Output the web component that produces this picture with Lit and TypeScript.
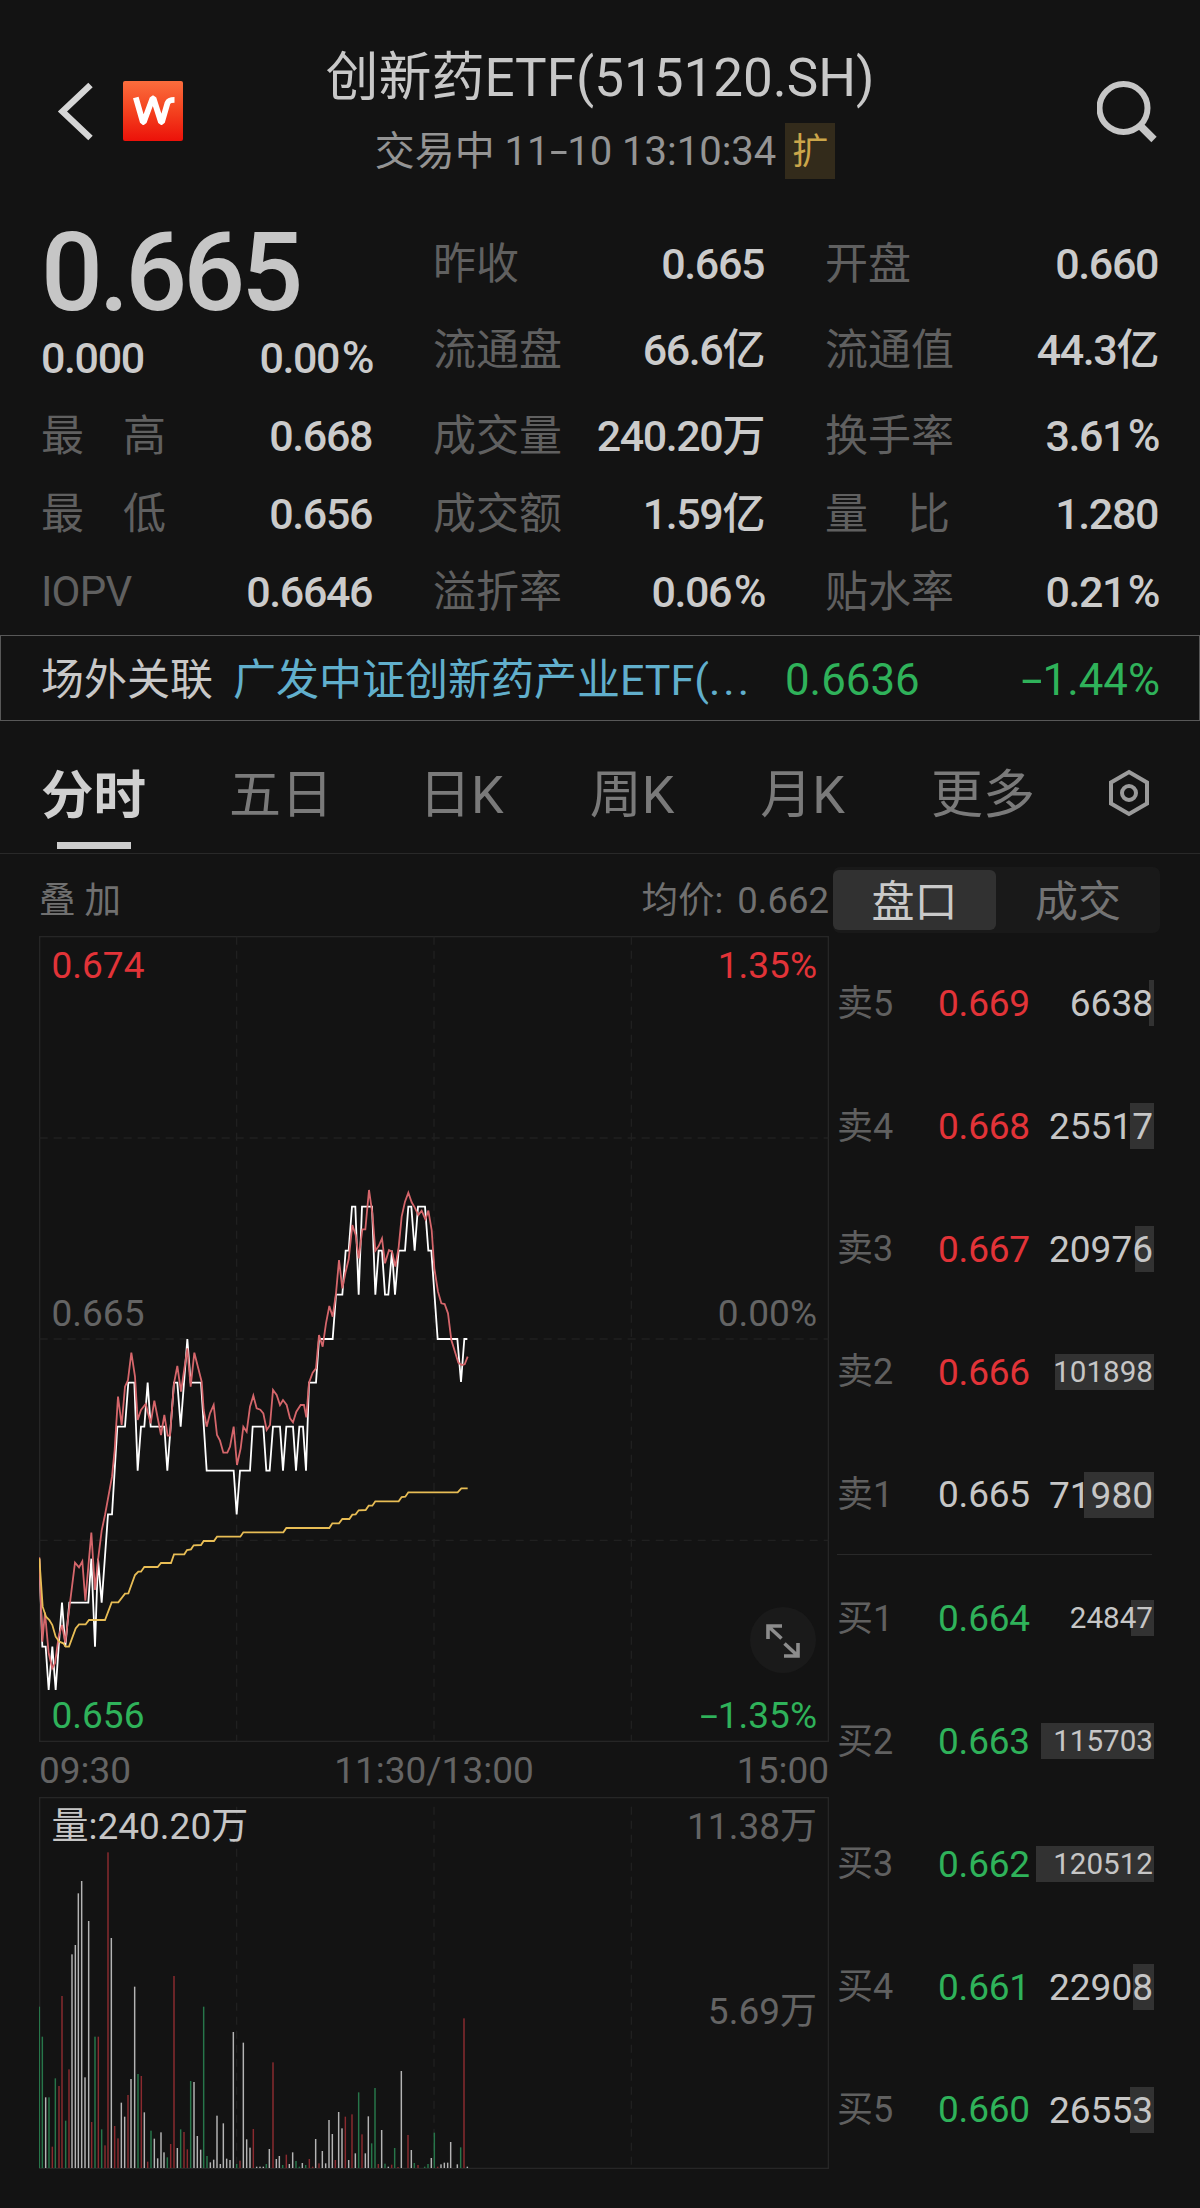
import { LitElement, html, css, svg } from "lit";
import { customElement, property } from "lit/decorators.js";
import { classMap } from "lit/directives/class-map.js";

type Tone = "up" | "down" | "flat";

// Chart samples live on a grid three times finer than the page pixels.
const PRICE_LINE =
  "28,1166 37,1430 47,1430 56,1560 67,1430 77,1560 86,1430 96,1298 106,1430 118,1298 175,1298 184,1166 195,1430 204,1166 215,1298 234,1033 246,1033 262,770 285,770 295,638 313,638 323,902 333,770 343,770 353,638 362,770 403,770 412,902 432,638 442,638 452,770 472,507 482,638 513,638 530,902 611,902 620,1033 630,902 660,902 668,770 700,770 709,902 719,902 729,770 750,770 759,902 769,770 789,770 798,902 808,770 819,770 828,902 837,638 858,638 867,507 908,507 918,374 937,374 947,242 956,242 966,110 976,110 986,374 996,110 1026,110 1036,374 1046,242 1056,242 1065,374 1075,374 1086,242 1095,374 1106,242 1125,242 1135,110 1144,110 1154,242 1164,110 1185,110 1195,242 1204,242 1223,507 1282,507 1293,636 1303,507 1312,507";
const IOPV_LINE =
  "28,1162 32,1280 37,1415 45,1328 56,1450 67,1495 75,1480 86,1400 96,1365 106,1418 116,1330 135,1178 147,1192 157,1174 166,1292 184,1088 195,1260 204,1170 215,1082 225,1035 246,920 254,840 264,680 275,765 285,650 294,630 304,548 315,620 323,750 333,720 347,702 362,760 373,692 393,795 403,735 413,797 420,797 432,640 442,588 453,665 472,535 482,650 493,548 515,635 521,720 530,770 540,730 551,705 561,795 570,812 580,848 592,848 600,830 611,770 621,885 632,835 640,770 650,785 660,710 670,677 680,715 691,719 700,730 710,780 720,765 729,660 740,675 750,705 759,690 770,705 780,745 789,757 799,725 812,705 822,705 829,742 837,638 848,608 858,595 867,495 878,530 888,460 898,408 908,440 918,370 927,270 937,355 947,305 956,268 967,165 977,195 986,265 997,178 1006,178 1017,60 1027,130 1036,242 1046,228 1056,205 1065,280 1077,240 1086,245 1096,290 1106,232 1115,140 1125,95 1135,68 1145,97 1154,112 1165,135 1175,122 1186,148 1195,122 1205,180 1213,295 1224,365 1234,400 1244,402 1254,430 1264,510 1285,578 1295,585 1304,583 1313,560";
const AVERAGE_LINE =
  "28,1165 38,1310 48,1340 58,1350 67,1365 77,1400 88,1415 100,1420 107,1430 117,1430 137,1375 147,1363 167,1363 177,1350 225,1350 245,1297 265,1297 285,1271 295,1270 315,1215 325,1205 333,1205 343,1191 383,1191 393,1179 423,1179 432,1153 463,1153 471,1140 483,1138 491,1126 513,1125 521,1113 552,1113 561,1100 631,1100 640,1087 760,1087 769,1074 898,1074 907,1060 927,1060 937,1047 958,1047 967,1034 977,1033 986,1021 1007,1020 1016,1007 1027,1007 1036,994 1106,994 1115,981 1126,980 1135,967 1283,967 1294,955 1313,955";

// Each entry is the bar's x, its tone (g, r or w) and its top edge.
const VOLUME =
  "28g650 37g740 47w922 57g922 67r1070 76g865 87r888 96r618 107g992 117r838 126w493 136w465 145w310 155w273 165w862 176w393 185r996 195g740 205r740 215g1018 225r1066 234r187 244w444 254r1008 264r1045 274w938 284w980 294r915 303w867 314w590 324g852 334r858 343w967 353r1115 363g1022 373w1046 383w1105 393w1027 402w1087 412g1102 422r1062 432r558 442w1074 452g1018 462r1026 472r1078 482g873 492w876 502w1038 512w1079 521g650 531g1098 541w1117 551w1109 561w977 571w1122 580w1000 590w1106 600w1110 610w726 620g1122 630r1112 640w758 650w1048 660w1073 670r1017 680w1130 690w1130 700w1130 709g1122 718w1077 729r817 739w1107 748w1098 758g1125 769r1094 778w1122 788w1087 798g1113 808g1130 817w1119 827g1125 838r1107 848r1130 857w1047 867r1120 877w1083 887w1120 897w990 907w1032 916r1110 926w966 936w1015 946r980 956w1110 966r973 976w1090 986g907 996r1033 1006w1090 1015w979 1025g1060 1035g894 1045r1122 1055w1020 1065g1121 1075w1130 1085r1124 1094g1074 1104r1131 1114w843 1134r1035 1144w1080 1153g1119 1164r1125 1184g1130 1194g1122 1204w1104 1213g1028 1223r1130 1233w1123 1243w1118 1253w1118 1262w1056 1282w1123 1292g1072 1302r685 1312w1130"
    .split(" ")
    .map((s) => {
      const m = /^(\d+)([grw])(\d+)$/.exec(s)!;
      return { x: +m[1], tone: m[2], top: +m[3] };
    });

const signed = (text: string) =>
  text.startsWith("-") ? html`<span class="dash">-</span>${text.slice(1)}` : text;

const dashStyle = css`
  .dash {
    display: inline-block;
    width: 0.49em;
    text-align: center;
    transform: scaleX(1.75);
  }
`;

const base = css`
  :host {
    display: block;
    box-sizing: border-box;
    font-family: Roboto, "Noto Sans CJK SC", sans-serif;
    line-height: 1.2;
    white-space: nowrap;
  }
  *,
  *::before {
    box-sizing: border-box;
  }
  svg {
    display: block;
  }
`;

@customElement("quote-header")
export class QuoteHeader extends LitElement {
  static styles = [
    base,
    css`
      .bar {
        height: 220px;
        display: grid;
        grid-template-columns: 183px 1fr 103px;
      }
      .left {
        display: flex;
        align-items: flex-start;
        gap: 28px;
        padding: 81px 0 0 56px;
      }
      .back,
      .logo {
        flex: none;
      }
      .middle {
        display: flex;
        flex-direction: column;
        align-items: center;
        padding: 44px 80px 0 0;
      }
      .title {
        font-size: 53px;
        line-height: 68px;
        color: #c8c8c8;
      }
      .sub {
        display: flex;
        align-items: center;
        gap: 9px;
        margin-top: 11px;
        height: 56px;
        font-size: 40px;
        line-height: 59px;
        color: #949494;
        padding-left: 10px;
      }
      .dash {
        display: inline-block;
        width: 0.44em;
        text-align: center;
        transform: scaleX(1.6);
      }
      .badge {
        width: 50px;
        height: 56px;
        line-height: 58px;
        text-align: center;
        font-size: 36px;
        background: #332b1b;
        color: #cba64a;
      }
      .search {
        padding-top: 80px;
      }
    `,
  ];
  render() {
    return html`<header class="bar">
      <div class="left">
        <svg class="back" width="39" height="60" viewBox="0 0 39 60" fill="none">
          <path d="M34.5 4 L6.5 30.5 L34.5 57" stroke="#d6d6d6" stroke-width="6.4" />
        </svg>
        <svg class="logo" width="60" height="60" viewBox="0 0 60 60">
          <defs>
            <linearGradient id="brand" x1="0" y1="0" x2="0" y2="1">
              <stop offset="0" stop-color="#fb6d3d" />
              <stop offset="0.5" stop-color="#f4421f" />
              <stop offset="1" stop-color="#ec1109" />
            </linearGradient>
          </defs>
          <rect width="60" height="60" rx="2" fill="url(#brand)" />
          <path
            d="M12.8 16.5 L19.8 41 H20.8 L29.5 17.5 H30.5 L38 41 H39 L44.5 22 Q45.8 18.8 51.5 18.8"
            fill="none" stroke="#fff" stroke-width="5.8" stroke-linejoin="bevel" />
        </svg>
      </div>
      <div class="middle">
        <div class="title">创新药ETF(515120.SH)</div>
        <div class="sub">
          <span>交易中 11<span class="dash">-</span>10 13:10:34</span>
          <span class="badge">扩</span>
        </div>
      </div>
      <div class="search">
        <svg width="62" height="64" viewBox="0 0 62 64" fill="none" stroke="#c6c6c6">
          <circle cx="26.5" cy="28" r="24" stroke-width="6" />
          <path d="M42.5 45 L57 59.5" stroke-width="7.5" />
        </svg>
      </div>
    </header>`;
  }
}

@customElement("quote-stats")
export class QuoteStats extends LitElement {
  static styles = [
    base,
    css`
      .grid {
        height: 415px;
        display: grid;
        grid-template-columns: 331px 331px 333px;
        column-gap: 61px;
        padding-left: 41px;
        font-size: 43px;
        letter-spacing: -1.4px;
        color: #cbcbcb;
        font-weight: 500;
      }
      .top {
        height: 176px;
        display: flex;
        flex-direction: column;
      }
      .row {
        height: 78px;
        padding-top: 3px;
        display: flex;
        align-items: center;
        justify-content: space-between;
      }
      .top .row {
        height: 86.5px;
      }
      .top .row.change {
        height: 67px;
      }
      .last {
        height: 104px;
        line-height: 106px;
        font-size: 109px;
        letter-spacing: -4px;
        color: #c6c6c6;
      }
      .pct {
        margin-left: 2.5px;
        margin-right: -1px;
        font-size: 44.5px;
        line-height: 1;
      }
      .label {
        color: #606060;
        font-weight: 400;
        letter-spacing: 0;
      }
      .label.wide {
        width: 125px;
        display: flex;
        justify-content: space-between;
      }
      .label.latin {
        font-size: 42px;
        letter-spacing: -0.8px;
      }
    `,
  ];
  private value(text: string) {
    return text.endsWith("%")
      ? html`<span>${text.slice(0, -1)}<span class="pct">%</span></span>`
      : html`<span>${text}</span>`;
  }
  private row(label: string, value: string) {
    const wide = label.includes(" ");
    return html`<div class="row">
      <span class=${classMap({ label: true, wide, latin: label === "IOPV" })}
        >${wide ? label.split(" ").map((c) => html`<span>${c}</span>`) : label}</span
      >
      ${this.value(value)}
    </div>`;
  }
  render() {
    return html`<section class="grid">
      <div>
        <div class="top">
          <div class="last">0.665</div>
          <div class="row change"><span>0.000</span>${this.value("0.00%")}</div>
        </div>
        ${this.row("最 高", "0.668")} ${this.row("最 低", "0.656")}
        ${this.row("IOPV", "0.6646")}
      </div>
      <div>
        <div class="top">${this.row("昨收", "0.665")} ${this.row("流通盘", "66.6亿")}</div>
        ${this.row("成交量", "240.20万")} ${this.row("成交额", "1.59亿")}
        ${this.row("溢折率", "0.06%")}
      </div>
      <div>
        <div class="top">${this.row("开盘", "0.660")} ${this.row("流通值", "44.3亿")}</div>
        ${this.row("换手率", "3.61%")} ${this.row("量 比", "1.280")}
        ${this.row("贴水率", "0.21%")}
      </div>
    </section>`;
  }
}

@customElement("linked-fund")
export class LinkedFund extends LitElement {
  static styles = [
    base,
    dashStyle,
    css`
      .row {
        height: 86px;
        border: 1.5px solid #585858;
        display: grid;
        grid-template-columns: 192px 552px 1fr auto;
        align-items: center;
        padding: 5px 39px 0 40px;
        font-size: 43px;
        color: #c8c8c8;
      }
      .name {
        color: #61afcc;
      }
      .dots {
        letter-spacing: 3px;
      }
      .down {
        color: #2fb25a;
        font-size: 43.8px;
      }
    `,
  ];
  render() {
    return html`<section class="row">
      <span>场外关联</span>
      <span class="name">广发中证创新药产业ETF(<span class="dots">...</span></span>
      <span class="down">0.6636</span>
      <span class="down">${signed("-1.44%")}</span>
    </section>`;
  }
}

@customElement("period-tabs")
export class PeriodTabs extends LitElement {
  static styles = [
    base,
    css`
      .tabs {
        height: 133px;
        display: flex;
        gap: 86px;
        padding: 37px 0 0 41px;
        border-bottom: 1px solid #292929;
        font-size: 52px;
        line-height: 76px;
        color: #7a7a7a;
      }
      .tab {
        display: flex;
        flex-direction: column;
        align-items: center;
      }
      .active {
        color: #d0d0d0;
        font-weight: 700;
        font-size: 52.5px;
        margin-right: -3px;
      }
      .active::after {
        content: "";
        width: 74px;
        height: 7px;
        margin-top: 8px;
        background: #cdcdcd;
      }
      .gear {
        margin: 11px 0 0 -13px;
      }
    `,
  ];
  render() {
    const tabs = ["分时", "五日", "日K", "周K", "月K", "更多"];
    return html`<nav class="tabs">
      ${tabs.map(
        (t, i) => html`<span class=${classMap({ tab: true, active: i === 0 })}>${t}</span>`
      )}
      <svg class="gear" width="42" height="48" viewBox="0 0 42 48" fill="none" stroke="#9b9b9b">
        <path d="M21 3 L39 13.5 V34.5 L21 45 L3 34.5 V13.5 Z" stroke-width="4" />
        <circle cx="21" cy="24" r="7" stroke-width="4" />
      </svg>
    </nav>`;
  }
}

@customElement("intraday-chart")
export class IntradayChart extends LitElement {
  static styles = [
    base,
    dashStyle,
    css`
      :host {
        width: 790px;
        font-size: 37px;
        color: #646464;
      }
      .caption {
        height: 82px;
        padding-top: 12px;
        display: flex;
        align-items: center;
        justify-content: space-between;
        font-size: 36.5px;
        color: #707070;
      }
      .avg {
        display: flex;
        gap: 14px;
      }
      .price,
      .volume {
        position: relative;
      }
      .price {
        height: 806px;
      }
      .volume {
        height: 372px;
      }
      .mark {
        position: absolute;
        line-height: 44px;
      }
      .l {
        left: 12.5px;
      }
      .r {
        right: 12px;
      }
      .up {
        color: #e23338;
      }
      .down {
        color: #2fb25a;
      }
      .bright {
        color: #c6c6c6;
      }
      .y1 {
        top: 8px;
      }
      .y2 {
        top: 356px;
      }
      .y3 {
        top: 758px;
      }
      .v1 {
        top: 8px;
      }
      .v2 {
        top: 193px;
      }
      .expand {
        position: absolute;
        right: 13px;
        top: 671px;
        width: 66px;
        height: 66px;
        border-radius: 50%;
        background: #1a1a1a;
      }
      .times {
        height: 55px;
        padding-top: 3px;
        display: flex;
        align-items: center;
        justify-content: space-between;
      }
      .frame {
        fill: none;
        stroke: #262626;
        stroke-width: 4;
      }
      .grid {
        fill: none;
        stroke: #202020;
        stroke-width: 4;
        stroke-dasharray: 24 18;
      }
      .line {
        fill: none;
        stroke-width: 5.4;
        stroke-linejoin: miter;
      }
      .last {
        stroke: #ffffff;
      }
      .iopv {
        stroke: #d5666b;
      }
      .mean {
        stroke: #e8bd55;
      }
      .g {
        fill: #27764a;
      }
      .r-bar {
        fill: #8a2a2f;
      }
      .w {
        fill: #b4b4b4;
      }
    `,
  ];
  @property() average = "0.662";
  render() {
    return html`
      <div class="caption">
        <span>叠 加</span>
        <span class="avg"><span>均价:</span><span>${this.average}</span></span>
      </div>
      <div class="price">
        <svg width="790" height="806" viewBox="27 -702 2370 2418">
          <rect class="frame" x="29" y="-700" width="2366" height="2414" />
          <path class="grid" d="M29 -96H2395M29 507H2395M29 1111H2395M620 -700V1714M1212 -700V1714M1804 -700V1714" />
          <polyline class="line last" points=${PRICE_LINE} />
          <polyline class="line iopv" points=${IOPV_LINE} />
          <polyline class="line mean" points=${AVERAGE_LINE} />
        </svg>
        <span class="mark l y1 up">0.674</span>
        <span class="mark r y1 up">1.35%</span>
        <span class="mark l y2">0.665</span>
        <span class="mark r y2">0.00%</span>
        <span class="mark l y3 down">0.656</span>
        <span class="mark r y3 down">${signed("-1.35%")}</span>
        <span class="expand">
          <svg width="66" height="66" viewBox="0 0 66 66" fill="none" stroke="#8c8c8c" stroke-width="3.6">
            <path d="M32 19 H18 V32 M18 19 L31.5 31.5" />
            <path d="M34 49 H48 V36 M48 49 L34.5 36.5" />
          </svg>
        </span>
      </div>
      <div class="times"><span>09:30</span><span>11:30/13:00</span><span>15:00</span></div>
      <div class="volume">
        <svg width="790" height="372" viewBox="27 21 2370 1116">
          <rect class="frame" x="29" y="23" width="2366" height="1112" />
          <path class="grid" d="M620 50V1134M1212 50V1134M1804 50V1134" />
          ${VOLUME.map(
            (b) => svg`<rect class=${b.tone === "r" ? "r-bar" : b.tone}
              x=${b.x - 2.2} y=${b.top} width="4.4" height=${1134 - b.top} />`
          )}
        </svg>
        <span class="mark l v1 bright">量:240.20万</span>
        <span class="mark r v1">11.38万</span>
        <span class="mark r v2">5.69万</span>
      </div>
    `;
  }
}

interface Level {
  name: string;
  price: string;
  tone: Tone;
  size: string;
  depth: number;
  small?: boolean;
}

const ASKS: Level[] = [
  { name: "卖5", price: "0.669", tone: "up", size: "6638", depth: 5 },
  { name: "卖4", price: "0.668", tone: "up", size: "25517", depth: 24 },
  { name: "卖3", price: "0.667", tone: "up", size: "20976", depth: 19 },
  { name: "卖2", price: "0.666", tone: "up", size: "101898", depth: 99, small: true },
  { name: "卖1", price: "0.665", tone: "flat", size: "71980", depth: 70 },
];
const BIDS: Level[] = [
  { name: "买1", price: "0.664", tone: "down", size: "24847", depth: 23, small: true },
  { name: "买2", price: "0.663", tone: "down", size: "115703", depth: 113, small: true },
  { name: "买3", price: "0.662", tone: "down", size: "120512", depth: 118, small: true },
  { name: "买4", price: "0.661", tone: "down", size: "22908", depth: 21 },
  { name: "买5", price: "0.660", tone: "down", size: "26553", depth: 24 },
];

@customElement("order-book")
export class OrderBook extends LitElement {
  static styles = [
    base,
    css`
      :host {
        width: 327px;
        padding-top: 13px;
        font-size: 37px;
      }
      .switch {
        height: 66px;
        display: grid;
        grid-template-columns: 163px 164px;
        grid-template-rows: 60px;
        padding: 3px 0;
        border-radius: 7px;
        background: #191919;
        font-size: 43px;
        line-height: 64px;
        text-align: center;
        color: #737373;
      }
      .on {
        background: #313131;
        color: #cacaca;
        border-radius: 6px;
      }
      .asks {
        margin-top: 9px;
      }
      .asks::after {
        content: "";
        display: block;
        height: 1px;
        width: 315px;
        margin: -2px 0 2px 4px;
        background: #292929;
      }
      .level {
        height: 122.8px;
        display: grid;
        grid-template-columns: 101px 1fr auto;
        align-items: center;
        padding: 0 6px 0 4px;
        color: #c6c6c6;
      }
      .name {
        color: #606060;
        font-size: 36px;
        padding-top: 2px;
      }
      .price {
        letter-spacing: -0.2px;
        padding-top: 2px;
      }
      .up {
        color: #e23338;
      }
      .down {
        color: #2fb25a;
      }
      .size {
        position: relative;
        height: 46px;
        line-height: 48px;
        padding-right: 1px;
      }
      .small {
        height: 36px;
        line-height: 37px;
        font-size: 29.6px;
      }
      .depth {
        position: absolute;
        right: 0;
        top: 0;
        height: 100%;
        background: #323232;
      }
      .num {
        position: relative;
      }
    `,
  ];
  private level(l: Level) {
    return html`<div class="level">
      <span class="name">${l.name}</span>
      <span class="price ${l.tone}">${l.price}</span>
      <span class=${classMap({ size: true, small: !!l.small })}>
        <span class="depth" style="width:${l.depth}px"></span><span class="num">${l.size}</span>
      </span>
    </div>`;
  }
  render() {
    return html`
      <div class="switch"><span class="on">盘口</span><span>成交</span></div>
      <div class="asks">${ASKS.map((l) => this.level(l))}</div>
      <div class="bids">${BIDS.map((l) => this.level(l))}</div>
    `;
  }
}

@customElement("app-root")
export class AppRoot extends LitElement {
  static styles = css`
    :host {
      display: block;
      width: 1200px;
      height: 2208px;
      overflow: hidden;
      background: #131313;
    }
    .body {
      display: flex;
      gap: 4px;
      padding-left: 39px;
    }
  `;
  render() {
    return html`
      <quote-header></quote-header>
      <quote-stats></quote-stats>
      <linked-fund></linked-fund>
      <period-tabs></period-tabs>
      <main class="body">
        <intraday-chart></intraday-chart>
        <order-book></order-book>
      </main>
    `;
  }
}
